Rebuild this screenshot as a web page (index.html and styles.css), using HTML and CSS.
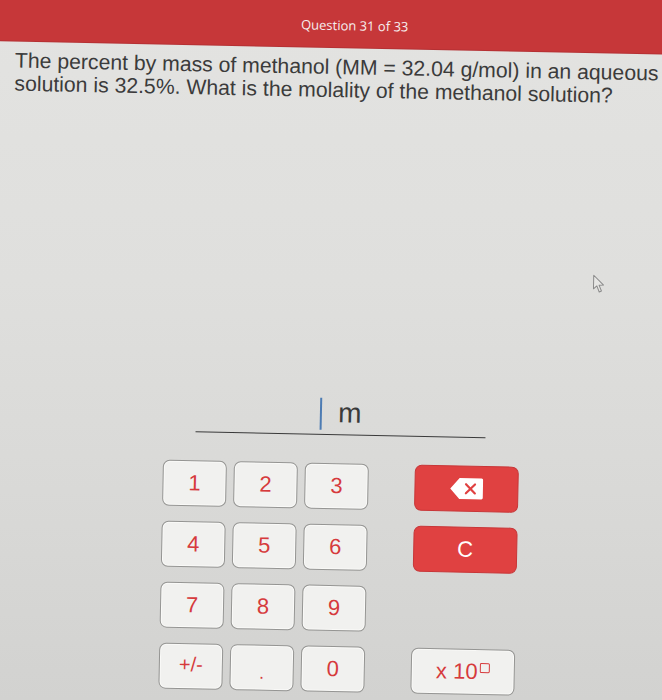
FILE: index.html
```html
<!DOCTYPE html>
<html lang="en">
<head>
<meta charset="utf-8">
<title>Question 31 of 33</title>
<link rel="stylesheet" href="styles.css">
</head>
<body>
<div class="viewport">
<div class="screen">
  <header class="topbar"><span class="title">Question 31 of 33</span></header>
  <main class="frame">
    <p class="question">The percent by mass of methanol (MM = 32.04 g/mol) in an aqueous solution is 32.5%. What is the molality of the methanol solution?</p>

    <div class="answer">
      <span class="caret"></span>
      <span class="unit">m</span>
    </div>

    <div class="keypad">
      <button class="key">1</button>
      <button class="key">2</button>
      <button class="key">3</button>
      <span class="spacer"></span>
      <button class="key red" aria-label="backspace">
        <svg width="34" height="22" viewBox="0 0 34 22">
          <path d="M10 0.5 H32 a1.5 1.5 0 0 1 1.5 1.5 V20 a1.5 1.5 0 0 1 -1.5 1.5 H10 L0.8 11 Z" fill="#fff"/>
          <path d="M16.5 6.5 L25.5 15.5 M25.5 6.5 L16.5 15.5" stroke="#e04141" stroke-width="2.2" stroke-linecap="round"/>
        </svg>
      </button>

      <button class="key">4</button>
      <button class="key">5</button>
      <button class="key">6</button>
      <span class="spacer"></span>
      <button class="key red">C</button>

      <button class="key">7</button>
      <button class="key">8</button>
      <button class="key">9</button>
      <span class="spacer"></span>
      <span class="spacer"></span>

      <button class="key small">+/-</button>
      <button class="key dot">.</button>
      <button class="key">0</button>
      <span class="spacer"></span>
      <button class="key">x 10<span class="box"></span></button>
    </div>

    <svg class="pointer" width="14" height="19" viewBox="0 0 14 19">
      <path d="M1 1 L1 14.5 L4.3 11.6 L6.8 17.6 L9 16.6 L6.5 10.8 L11 10.6 Z" fill="#e6e6e4" stroke="#8a8a8a" stroke-width="1" stroke-linejoin="round"/>
    </svg>
  </main>
</div>
</div>
</body>
</html>
```

FILE: styles.css
```css
html, body {
  margin: 0;
  padding: 0;
  height: 100%;
}

body {
  overflow: hidden;
  background: linear-gradient(180deg, #e3e3e1 0%, #dfdfdd 40%, #d8d8d6 75%, #d2d2d0 100%);
  font-family: "Liberation Sans", Arial, sans-serif;
}

.viewport {
  width: 662px;
  height: 700px;
  overflow: hidden;
}

.screen {
  width: 740px;
  margin-left: -39px;
  transform: rotate(1.15deg);
  transform-origin: 370px 350px;
}

.topbar {
  margin-top: -40px;
  padding-top: 44px;
  padding-left: 36px;
  height: 43px;
  background: #c63739;
  text-align: center;
  box-shadow: 0 1px 0 #b53134;
}

.title {
  display: inline-block;
  line-height: 43px;
  font-family: "Open Sans", sans-serif;
  font-size: 13px;
  color: #f6eeee;
}

.frame {
  position: relative;
  width: 662px;
  margin-left: 39px;
}

.question {
  margin: 8px 0 0 0;
  padding: 0 0 0 10px;
  width: 652px;
  font-size: 21.2px;
  line-height: 23px;
  color: #3b3b3b;
}

.answer {
  margin: 297px 0 0 198px;
  width: 290px;
  height: 32px;
  padding-bottom: 4px;
  border-bottom: 1.5px solid #3a3a3a;
  display: flex;
  justify-content: center;
  align-items: flex-end;
  gap: 16px;
}

.caret {
  width: 2px;
  height: 32px;
  background: #4d7cb3;
}

.unit {
  font-size: 28px;
  line-height: 28px;
  color: #3a3a3a;
  margin-bottom: 3px;
}

.keypad {
  margin: 28px 0 0 166px;
  display: grid;
  grid-template-columns: 64px 64px 64px 32px 104px;
  grid-auto-rows: 46px;
  column-gap: 7px;
  row-gap: 15px;
}

.key {
  margin: 0;
  padding: 0;
  border: 1.2px solid #959593;
  border-radius: 7px;
  background: #f1f1ef;
  font-family: "Liberation Sans", Arial, sans-serif;
  font-size: 22px;
  color: #d63a3c;
  display: flex;
  align-items: center;
  justify-content: center;
  box-shadow: inset 0 0 0 1px #fafaf8;
}

.key.red {
  background: #e04141;
  border-color: #c83638;
  color: #fff;
  box-shadow: none;
}

.key.small {
  font-size: 20px;
  padding-bottom: 4px;
}

.key.dot {
  font-size: 18px;
  padding-top: 10px;
}

.box {
  display: inline-block;
  width: 8px;
  height: 8px;
  margin-left: 2px;
  margin-bottom: 9px;
  border: 1.5px solid #d63a3c;
  border-radius: 1.5px;
}

.pointer {
  position: absolute;
  left: 592px;
  top: 214px;
}
```
